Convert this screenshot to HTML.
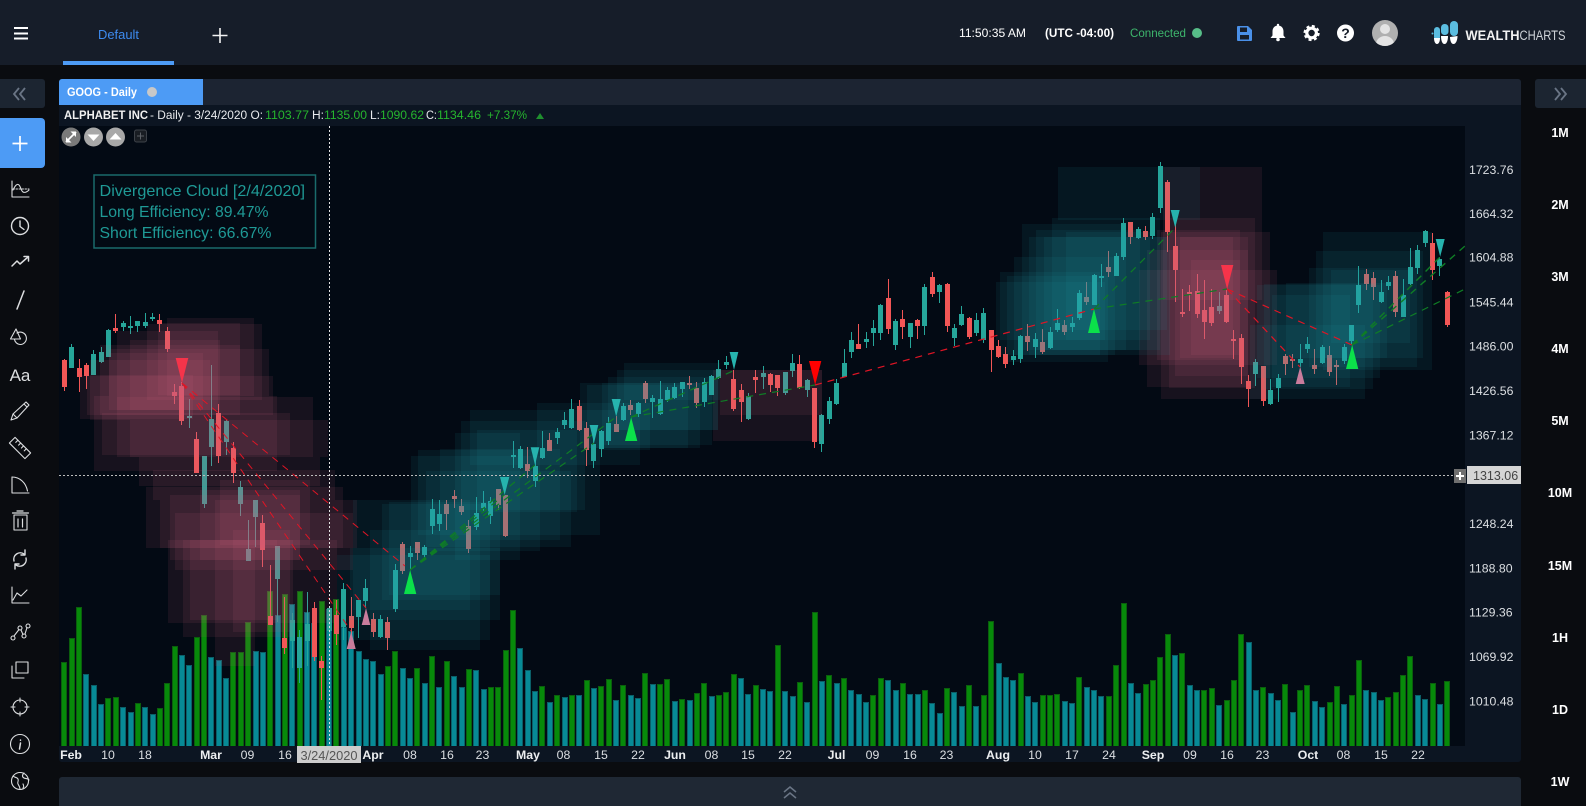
<!DOCTYPE html>
<html>
<head>
<meta charset="utf-8">
<title>WealthCharts</title>
<style>
html,body{margin:0;padding:0;background:#0a0c10;width:1586px;height:806px;overflow:hidden}
svg{display:block;position:absolute;left:0;top:0}
text{font-family:"Liberation Sans",sans-serif}
.ax{font-size:12.3px;fill:#dcdfe3;text-anchor:middle}
.mo{font-size:12.3px;fill:#eceef0;text-anchor:middle;font-weight:bold}
.pr{font-size:12.3px;fill:#dcdfe3}
.tf{font-size:12.5px;fill:#fff;text-anchor:middle;font-weight:bold}
.ic{fill:none;stroke:#dcdee0;stroke-width:1.1;stroke-linecap:round;stroke-linejoin:round}
.gr{fill:#26b52e;font-size:12.3px}
.wh{fill:#e8eaed;font-size:12.3px}
</style>
</head>
<body>
<svg width="1586" height="806" viewBox="0 0 1586 806" xmlns="http://www.w3.org/2000/svg">
<defs><clipPath id="cc"><rect x="59" y="126" width="1406" height="620"/></clipPath>
<clipPath id="av"><circle cx="1385" cy="33" r="13"/></clipPath></defs>
<rect width="1586" height="806" fill="#0a0c10"/>
<!-- top bar -->
<rect width="1586" height="65" fill="#161d29"/>
<rect x="63" y="61" width="111" height="4" fill="#4d9bf5"/>
<path d="M14 28h14M14 33.500h14M14 38.500h14" stroke="#fff" stroke-width="2"/>
<text x="98" y="39" font-size="12.500" fill="#3d8bf0" textLength="41" lengthAdjust="spacingAndGlyphs">Default</text>
<path d="M220 28v15M212.500 35.500h15" stroke="#f2f2f2" stroke-width="1.600"/>
<text x="959" y="37" font-size="12" fill="#fff" textLength="67" lengthAdjust="spacingAndGlyphs">11:50:35 AM</text>
<text x="1045" y="37" font-size="12" font-weight="bold" fill="#fff" textLength="69" lengthAdjust="spacingAndGlyphs">(UTC -04:00)</text>
<text x="1130" y="37" font-size="12" fill="#3db56c" textLength="56" lengthAdjust="spacingAndGlyphs">Connected</text>
<circle cx="1197" cy="33" r="5" fill="#57bd88"/>
<path d="M1238 26h10l4 4v10a1 1 0 0 1-1 1h-13a1 1 0 0 1-1-1v-13a1 1 0 0 1 1-1z" fill="#4a90e8"/>
<rect x="1240" y="27.500" width="7" height="4.500" fill="#161d29"/>
<rect x="1240" y="35" width="9" height="4.500" fill="#161d29"/>
<path d="M1278 25.500c-3.500 0-5.500 2.500-5.500 6v4l-2 2.500h15l-2-2.500v-4c0-3.500-2-6-5.500-6z" fill="#fff"/>
<circle cx="1278" cy="39.500" r="1.800" fill="#fff"/><circle cx="1278" cy="25" r="1.200" fill="#fff"/>
<circle cx="1311.600" cy="33" r="4.800" fill="none" stroke="#fff" stroke-width="3.200"/>
<circle cx="1311.600" cy="33" r="7" fill="none" stroke="#fff" stroke-width="2.200" stroke-dasharray="3 2.500"/>
<circle cx="1345.500" cy="33" r="8.500" fill="#fff"/>
<text x="1345.500" y="38" font-size="14" font-weight="bold" fill="#161d29" text-anchor="middle">?</text>
<circle cx="1385" cy="33" r="13" fill="#b0b0b0"/>
<g clip-path="url(#av)"><circle cx="1385" cy="29" r="5" fill="#e4e4e4"/><ellipse cx="1385" cy="44" rx="9" ry="8" fill="#e4e4e4"/></g>
<!-- logo -->
<rect x="1434" y="27" width="6" height="13" rx="3" fill="#5bbde0"/>
<rect x="1441" y="24" width="7.500" height="11" rx="3.500" fill="#5bbde0"/>
<rect x="1450" y="21" width="8" height="15" rx="4" fill="#5bbde0"/>
<path d="M1434 38c0 3 1 6 3 6s3-3 3-6zM1441 36c0 4 1 8 3.500 8s3.500-4 3.500-8zM1450 37c0 3 1 7 3.500 7s4-4 4-8z" fill="#fff"/>
<circle cx="1432.500" cy="33.500" r="1" fill="#5bbde0"/>
<text x="1465.500" y="40" font-size="13.500" font-weight="bold" fill="#f2f2f2" textLength="54" lengthAdjust="spacingAndGlyphs">WEALTH</text>
<text x="1519.500" y="40" font-size="13.500" fill="#cfd3d8" textLength="46" lengthAdjust="spacingAndGlyphs">CHARTS</text>

<!-- side buttons -->
<path d="M0 79h42a3 3 0 0 1 3 3v23a3 3 0 0 1-3 3h-42z" fill="#1c2531"/>
<path d="M19 88l-5 6 5 6M25 88l-5 6 5 6" fill="none" stroke="#6a7585" stroke-width="1.800"/>
<path d="M1586 79h-48a3 3 0 0 0-3 3v23a3 3 0 0 0 3 3h48z" fill="#1c2531"/>
<path d="M1555 88l5 6-5 6M1561 88l5 6-5 6" fill="none" stroke="#6a7585" stroke-width="1.800"/>
<path d="M0 118h41a4 4 0 0 1 4 4v42a4 4 0 0 1-4 4h-41z" fill="#4d9bf5"/>
<path d="M20 136v15M12.500 143.500h15" stroke="#fff" stroke-width="1.700"/>

<!-- panel -->
<rect x="59" y="79" width="1462" height="683" rx="3" fill="#0c1522"/>
<path d="M59 82a3 3 0 0 1 3-3h1456a3 3 0 0 1 3 3v23h-1462z" fill="#1c2432"/>
<path d="M59 82a3 3 0 0 1 3-3h141v26h-144z" fill="#4d9bf5"/>
<text x="67" y="96" font-size="12" font-weight="bold" fill="#fff" textLength="70" lengthAdjust="spacingAndGlyphs">GOOG - Daily</text>
<circle cx="152" cy="92" r="5" fill="#c8c8c8"/>
<rect x="59" y="126" width="1406" height="620" fill="#030a14"/>

<g id="chart" clip-path="url(#cc)"></g>

<!-- info line -->
<text x="64" y="119" font-size="12" font-weight="bold" fill="#f0f0f0" textLength="84" lengthAdjust="spacingAndGlyphs">ALPHABET INC</text>
<text x="150" y="119" class="wh" textLength="113" lengthAdjust="spacingAndGlyphs">- Daily - 3/24/2020 O:</text>
<text x="265" y="119" class="gr" textLength="44" lengthAdjust="spacingAndGlyphs">1103.77</text>
<text x="312" y="119" class="wh" textLength="12" lengthAdjust="spacingAndGlyphs">H:</text>
<text x="324" y="119" class="gr" textLength="43" lengthAdjust="spacingAndGlyphs">1135.00</text>
<text x="370" y="119" class="wh" textLength="10" lengthAdjust="spacingAndGlyphs">L:</text>
<text x="380" y="119" class="gr" textLength="44" lengthAdjust="spacingAndGlyphs">1090.62</text>
<text x="426" y="119" class="wh" textLength="11" lengthAdjust="spacingAndGlyphs">C:</text>
<text x="437" y="119" class="gr" textLength="44" lengthAdjust="spacingAndGlyphs">1134.46</text>
<text x="487" y="119" class="gr" textLength="40" lengthAdjust="spacingAndGlyphs">+7.37%</text>
<path d="M536 119l4-6 4 6z" fill="#1f8f2e"/>

<!-- chart controls -->
<circle cx="71" cy="137" r="9.500" fill="#7a7a7a"/>
<path d="M66 142l10-10" stroke="#fff" stroke-width="1.800"/><path d="M66 137v5.500h5.500zM76 137v-5.500h-5.500z" fill="#fff"/>
<circle cx="93.500" cy="137" r="9.500" fill="#a8a8a8"/><path d="M87.500 134.500h12l-6 6.500z" fill="#fff"/>
<circle cx="115.500" cy="137" r="9.500" fill="#a8a8a8"/><path d="M109.500 139.500h12l-6-6.500z" fill="#fff"/>
<rect x="134.500" y="130" width="12" height="12" rx="2" fill="#191d23" stroke="#3d4249"/>
<path d="M140.500 132.500v7M137 136h7" stroke="#5c6066"/>

<!-- divergence box -->
<rect x="94" y="175" width="221.500" height="73" fill="none" stroke="#1a6b6b" stroke-width="1.500"/>
<text x="99.500" y="196" font-size="16" fill="#1f9a96" textLength="205.500" lengthAdjust="spacingAndGlyphs">Divergence Cloud [2/4/2020]</text>
<text x="99.500" y="217" font-size="16" fill="#1f9a96" textLength="169" lengthAdjust="spacingAndGlyphs">Long Efficiency: 89.47%</text>
<text x="99.500" y="238" font-size="16" fill="#1f9a96" textLength="172" lengthAdjust="spacingAndGlyphs">Short Efficiency: 66.67%</text>

<!-- price axis -->
<g class="pr">
<text x="1469" y="174" class="pr">1723.76</text>
<text x="1469" y="218" class="pr">1664.32</text>
<text x="1469" y="261.500" class="pr">1604.88</text>
<text x="1469" y="306.500" class="pr">1545.44</text>
<text x="1469" y="350.500" class="pr">1486.00</text>
<text x="1469" y="395" class="pr">1426.56</text>
<text x="1469" y="439.500" class="pr">1367.12</text>
<text x="1469" y="528" class="pr">1248.24</text>
<text x="1469" y="572.500" class="pr">1188.80</text>
<text x="1469" y="616.500" class="pr">1129.36</text>
<text x="1469" y="661" class="pr">1069.92</text>
<text x="1469" y="705.500" class="pr">1010.48</text>
</g>
<rect x="1454" y="469" width="12" height="14" fill="#6f6f6f"/>
<path d="M1460 472v8M1456 476h8" stroke="#fff" stroke-width="2"/>
<rect x="1467" y="466" width="54" height="18" fill="#d5d5d5"/>
<text x="1473" y="480" font-size="12.500" fill="#444">1313.06</text>

<!-- time axis -->
<text x="71" y="759" class="mo">Feb</text><text x="108" y="759" class="ax">10</text><text x="145" y="759" class="ax">18</text>
<text x="211" y="759" class="mo">Mar</text><text x="247.500" y="759" class="ax">09</text><text x="285" y="759" class="ax">16</text>
<text x="373" y="759" class="mo">Apr</text><text x="410" y="759" class="ax">08</text><text x="447" y="759" class="ax">16</text><text x="482.500" y="759" class="ax">23</text>
<text x="528" y="759" class="mo">May</text><text x="563.500" y="759" class="ax">08</text><text x="601" y="759" class="ax">15</text><text x="638" y="759" class="ax">22</text>
<text x="675" y="759" class="mo">Jun</text><text x="711.500" y="759" class="ax">08</text><text x="748" y="759" class="ax">15</text><text x="785" y="759" class="ax">22</text>
<text x="836.500" y="759" class="mo">Jul</text><text x="872.500" y="759" class="ax">09</text><text x="910" y="759" class="ax">16</text><text x="946.500" y="759" class="ax">23</text>
<text x="998" y="759" class="mo">Aug</text><text x="1035" y="759" class="ax">10</text><text x="1072" y="759" class="ax">17</text><text x="1109" y="759" class="ax">24</text>
<text x="1153" y="759" class="mo">Sep</text><text x="1190" y="759" class="ax">09</text><text x="1227" y="759" class="ax">16</text><text x="1262.500" y="759" class="ax">23</text>
<text x="1308" y="759" class="mo">Oct</text><text x="1343.500" y="759" class="ax">08</text><text x="1381" y="759" class="ax">15</text><text x="1418" y="759" class="ax">22</text>
<rect x="297" y="746" width="64" height="17" fill="#cdcdcd"/>
<text x="329" y="760" font-size="12.500" fill="#555" text-anchor="middle" textLength="57" lengthAdjust="spacingAndGlyphs">3/24/2020</text>

<!-- bottom panel -->
<path d="M59 806v-26a3 3 0 0 1 3-3h1456a3 3 0 0 1 3 3v26z" fill="#1f2834"/>
<path d="M784 792l6-5 6 5M784 798l6-5 6 5" fill="none" stroke="#6a7585" stroke-width="1.500"/>

<!-- right timeframes -->
<text x="1560" y="137" class="tf">1M</text>
<text x="1560" y="209" class="tf">2M</text>
<text x="1560" y="281" class="tf">3M</text>
<text x="1560" y="353" class="tf">4M</text>
<text x="1560" y="425" class="tf">5M</text>
<text x="1560" y="497" class="tf">10M</text>
<text x="1560" y="570" class="tf">15M</text>
<text x="1560" y="642" class="tf">1H</text>
<text x="1560" y="714" class="tf">1D</text>
<text x="1560" y="786" class="tf">1W</text>

<!-- left tools -->
<g class="ic">
<path d="M12 181v16h17"/><path d="M13 190c2-4 4-7 6-5s2 6 4 7 4 0 6-2"/><path d="M13 189h16" stroke-dasharray="1.500 1.500" stroke-width="1"/>
<circle cx="20" cy="226" r="8.500" stroke-width="1.400"/><path d="M20 221v5.500l4 3" stroke-width="1.400"/>
<path d="M12 266l5-5 3 3 8-7" stroke-width="1.500"/><path d="M24 256.500h4.500v4.500" stroke-width="1.500"/>
<path d="M17 309l7-18" stroke-width="1.500"/>
<path d="M16 329l-5.500 10h10z"/><path d="M17 333a6.200 6.200 0 1 1 3 11.500 6 6 0 0 1-5.500-5"/>
<path d="M11 420l2-6 13-12 3 3-12 13z"/><path d="M13 414l4 4M24 404l3 3"/>
<g transform="rotate(45 20 448)"><rect x="9" y="444" width="22" height="8"/><path d="M13 444v3M17 444v3M21 444v3M25 444v3"/></g>
<path d="M12 477v16h17"/><path d="M12 477c8 0 14 6 15.500 14"/>
<rect x="14" y="515" width="13" height="15"/><path d="M12.500 513h16M17 511h6M18 519v8M22.500 519v8" stroke-width="1.200"/>
<path d="M14 561a6.500 6.500 0 0 1 10-7M26 558a6.500 6.500 0 0 1-10 7" stroke-width="1.400"/><path d="M25 550v5h-4M15 569v-5h4" stroke-width="1.400"/>
<path d="M12 587v16h17"/><path d="M13 600l4-7 4 3 6-6"/>
<circle cx="13" cy="638" r="2"/><circle cx="20" cy="628" r="2"/><circle cx="24" cy="636" r="2"/><circle cx="28" cy="626" r="2"/><path d="M14 636l5-6.500M21 630l2 4.500M25 634l2-6.500"/>
<rect x="16" y="662" width="12" height="11"/><path d="M12 666v12h12"/>
<circle cx="20" cy="707" r="7"/><path d="M20 698v4M20 712v4M11 707h4M25 707h4"/>
<circle cx="20" cy="744" r="9.500"/><path d="M20.500 740v.2M20.500 743l-1 6"  stroke-width="1.500"/>
<circle cx="20" cy="781" r="8.500"/><path d="M13 776c2 2 4 1 5 3s-1 3 0 5 2 3 2 5M24 773c-2 2-2 4 0 5s4 0 5 2M23 784c1 2 1 3 0 4" stroke-width="1.100"/>
</g>
<text x="20" y="381" font-size="17" fill="#dcdee0" text-anchor="middle">Aa</text>
</svg>

<script>
var X=function(i){return 64.3+7.356*i};
var h='';
// volume bars
var V5="307,235,142,-343,-376,-433,415,412,-442,-457,430,-442,-463,445,370,259,-286,-316,232,166,-292,-301,-355,277,277,187,-274,-277,94,-166,103,-133,94,-157,-190,124,-148,118,-200,-212,-274,-298,-304,-343,319,274,-325,-355,325,-370,289,-382,304,-349".split(',');
var V8="-292,238,-241,-298,292,292,181,61,-175,-241,-304,289,-337,316,-322,316,-316,271,-295,289,268,-331,286,-316,-325,250,-283,283,268,-334,328,-331,310,280,-319,316,307,253,-265,-313,286,-298,-304,166,-304,-319,277,-337,67,-274,256,-280,265,-301,-313,-337,316,265,-271,-301,280,-313,-313,301,-340,-370,295,-307,-349,286,-349,316,94,-220,-262,-271,250,-319,-337,316,316,313,-334,-340,262,-292,-301,-319,319,226,40,-280,-310,283,271,202,133,-196,190,-286,-301,301,295,-346,331,271,133,-157,-301,292,-310,-331,283,-367,301,286,-334,-352,337,289,-343,316,211,-301,-307,-331,322,307,256,199,-316,-328,280,-343,274".split(',');
function vol(i,v,o){v=+v;var g=v>0,y=Math.round(o+Math.abs(v)/3),x=Math.round(X(i)-3);
h+='<rect x="'+(x+.5)+'" y="'+(y+.5)+'" width="5" height="'+(746-y)+'" fill="'+(g?'#078a0a':'#078a96')+'" stroke="'+(g?'#0b5e0d':'#0b5f68')+'"/>';}
V5.forEach(function(v,i){vol(i,v,560)});
V8.forEach(function(v,i){vol(i+54,v,590)});
// candles
var S=[[0,300,"R180 261 177 272,T141 204 133 204,R204 231 178 275,R195 228 190 266,T162 225 150 225,T156 186 141 189,T90 171 88 171,R84 93 43 98,T69 81 64 92,T78 84 49 101,T63 78 63 95,T66 78 40 84,T51 57 40 64,R60 72 42 95,R93 147 82 156,R276 288 252 311,R258 363 246 374,T348 354 298 384,R417 519 396 519,T468 612 468 623,T357 441 195 499,R339 468 312 488,T363 426 360 464,R444 519 427 548,T561 612 543 647,T747 782 661 782,T600 651 600 740,R669 750 645 800"],
[28,560,"R168 195 15 195,T-42 57 -42 185,R234 264 110 283,T180 243 158 325,T231 324 210 368,T192 243 97 318,R144 291 127 304,R303 324 288 420,T144 213 143 240,R165 222 120 255,T87 201 70 240,R168 204 112 240,T120 171 120 235,T84 123 58 145,R177 216 160 232,T177 231 165 235,R186 234 171 271,T30 147 12 157,R-48 33 -54 42,T-21 -9 -42 30,R-54 -21 -54 0,T-39 -15 -45 0,T-153 -102 -182 -78,T-138 -108 -180 -88,R-168 -138 -180 -90,R-192 -183 -210 -156"],
[54,340,"R498 516 478 525,R558 627 540 640,T519 560 470 570,T489 504 453 515,T483 528 470 551,R447 495 447 510,R465 588 465 590,T345 352 303 384,T327 385 318 388,R372 394 321 415,T378 423 360 440,T324 354 273 358,R300 333 279 333,T276 294 264 313,T240 255 216 268,T207 264 178 268,R198 270 180 272,R264 330 246 378,T312 363 255 385,T273 327 270 352,T249 303 231 316,R252 276 228 276,T198 240 190 243,R195 210 180 225,T189 222 187 232,R129 177 124 188,T174 186 165 235,T177 222 123 224,T150 180 141 185,T141 174 129 178,T126 147 126 172,R129 135 108 147,R144 189 126 205,T126 186 114 202,T108 165 106 165,T87 115 60 118,T66 75 48 88,R117 207 90 213,R150 186 132 247,T168 237 160 240,R111 120 90 159,T99 111 78 147,R102 135 98 156,R105 144 105 167"],
[98,260,"T336 400 336 404,T309 333 282 352,R312 384 285 387,T360 390 358 410,R384 546 384 564,T465 552 462 575,T423 477 411 492,T369 432 358 435,T309 351 267 351,T240 276 216 293,R252 267 192 267,T237 246 216 263,T204 219 181 258,T135 219 132 240,R114 207 57 222,T183 255 178 270,R177 201 150 237,T189 231 189 264,R180 198 177 237,T81 198 72 225,R51 102 36 111,T75 96 72 129,R72 198 69 216,T204 234 192 259,T162 195 138 198,R174 231 171 237,T180 219 159 228,T159 240 145 248,R210 270 210 336"],
[127,150,"R588 620 570 625,R612 641 590 653,T618 630 600 644,T558 627 556 638,R558 576 522 602,T567 591 550 623,R576 606 538 612,T546 594 532 597,T519 540 478 545,R525 546 511 554,T519 531 501 545,T429 504 420 510,R441 456 396 464,T375 465 372 465,T378 384 343 410,R351 366 304 381,T318 378 310 378,T219 321 204 330,R216 261 215 282,T237 264 232 266,R243 261 228 269,T201 258 190 266,T48 174 36 188,R96 246 90 305,R288 360 210 455,R486 492 417 500,R426 433 405 483,R423 492 372 503,R480 516 390 566,R471 519 417 528,T468 483 427 492,R435 516 420 519,R567 573 540 628,R564 651 552 702,R693 717 675 771,T636 672 627 708,R648 753 648 768,T720 762 687 765,T684 714 672 756,R618 642 612 674,R627 633 612 654,T627 639 583 650,T582 597 561 609,R645 657 597 671,T591 639 586 642,R615 666 588 678,R645 651 630 705,T591 633 582 642,T525 573 525 585,T405 465 348 488,R372 402 357 420,R384 411 366 450,T426 456 390 459,T396 408 378 420,R378 486 363 500,T435 501 387 501,T351 402 295 405,T300 354 285 372,T243 279 240 292,R279 360 250 390,T327 348 320 378,R426 525 423 530"]];
S.forEach(function(s){s[2].split(',').forEach(function(c,k){var i=s[0]+k,col=c[0]=='R'?'#f25656':'#26a69a',n=c.slice(1).split(' ').map(function(q){return Math.round(s[1]+q/3)});
var x=Math.round(X(i)-2.5);
h+='<rect x="'+(x+2)+'" y="'+n[2]+'" width="1" height="'+(n[3]-n[2])+'" fill="'+col+'"/><rect x="'+x+'" y="'+n[0]+'" width="5" height="'+Math.max(n[1]-n[0],2)+'" fill="'+col+'"/>';});});
// clouds
var PK=[[167,318,254,396],[158,323,240,395],[147,324,262,400],[117,331,218,410],[109,349,269,396],[109,353,203,410],[87,376,273,415],[80,375,193,419],[94,396,277,471],[102,413,290,455],[117,397,313,457],[130,420,328,457],[139,457,320,486],[153,470,335,500],[146,487,343,548],[160,500,357,548],[175,513,353,570],[168,540,337,623],[183,540,293,637],[190,540,277,620],[215,500,255,666],[233,530,290,632],[130,340,220,410],[90,360,210,420],[100,345,240,415],[200,490,300,560],[220,480,310,545],[170,495,300,560],
[713,370,822,441],[720,370,822,415],
[1163,167,1262,300],[1169,218,1255,388],[1157,230,1240,360],[1175,237,1248,376],[1147,250,1248,387],[1139,270,1277,365],[1161,232,1270,399],[1180,237,1233,358],[1191,260,1240,355]];
var TL=[[337,555,490,640],[350,548,500,620],[353,500,470,610],[382,504,490,600],[389,502,500,595],[370,530,480,650],[411,456,540,551],[418,450,600,535],[426,471,571,547],[440,449,560,540],[455,433,520,560],[470,410,640,465],[461,421,585,510],[477,430,577,512],[537,403,650,450],[580,383,700,448],[587,385,688,448],[602,383,712,445],[608,377,718,430],[617,370,718,430],[624,363,720,400],
[1058,167,1200,220],[1052,218,1160,350],[1022,224,1126,350],[1036,230,1140,350],[1029,237,1170,355],[1044,237,1167,330],[1066,232,1150,340],[1014,257,1115,355],[1000,272,1100,355],[1007,276,1108,362],[996,282,1105,340],
[1323,232,1432,370],[1316,251,1423,358],[1309,268,1417,367],[1331,270,1410,343],[1257,285,1380,378],[1264,284,1373,389],[1286,283,1387,358],[1250,325,1365,399],[1272,295,1350,387]];
PK.forEach(function(r){h+='<rect x="'+r[0]+'" y="'+r[1]+'" width="'+(r[2]-r[0])+'" height="'+(r[3]-r[1])+'" fill="rgb(210,95,130)" fill-opacity=".1"/>'});
TL.forEach(function(r){h+='<rect x="'+r[0]+'" y="'+r[1]+'" width="'+(r[2]-r[0])+'" height="'+(r[3]-r[1])+'" fill="rgb(30,165,170)" fill-opacity=".085"/>'});
// dashed lines
function L(a,b,c,d,col,w){h+='<line x1="'+a+'" y1="'+b+'" x2="'+c+'" y2="'+d+'" stroke="'+col+'" stroke-width="'+(w||1)+'" stroke-dasharray="7 6"/>'}
var R='#e01525',G='#0f7d25';
L(182,383,405,566,R);L(182,383,366,608,R);L(182,383,351,631,R);
L(410,570,504.7,494.7,G,1.2);L(410,570,535,465,G,1.2);L(410,570,594,443,G,1.2);L(410,570,616,417,G,1.2);
L(631,417,735,370,G,1.2);L(631,417,815,385,G,1.2);
L(815,385,1094,309,R,1.2);
L(1094,309,1175,228,G,1.2);L(1094,309,1227,289,G,1.2);
L(1227,289,1352,345,R,1.2);L(1227,289,1300,367,R,1.2);
L(1352,345,1440,257,G,1.4);L(1352,345,1465,246,G,1.4);L(1352,345,1465,289,G,1.2);
// triangles
function T(a,b,y0,y1,col,up){var m=(a+b)/2;h+='<path d="'+(up?'M'+m+' '+y0+'L'+b+' '+y1+'L'+a+' '+y1+'Z':'M'+a+' '+y0+'L'+b+' '+y0+'L'+m+' '+y1+'Z')+'" fill="'+col+'"/>'}
var GU='#0be04a',TD='#26b3ae',PU='#c97c9c',RD='#f5344a';
T(175.7,188.3,358,383,RD,0);T(346.7,355.7,631.7,649,PU,1);T(361.7,370.3,608,625,PU,1);T(404,416.3,570,594,GU,1);
T(500,509.3,477,495,TD,0);T(530.7,539.3,447.3,465,TD,0);T(589.7,598.3,425,443.3,TD,0);T(611.7,620.7,399,416.7,TD,0);T(729.7,738.3,352,370,TD,0);
T(625,637.3,417.3,441,GU,1);T(809,821.3,361,385,'#ff0000',0);T(1088,1100,308.7,333,GU,1);T(1170.7,1179.7,210,227.7,TD,0);T(1221,1233.3,265,289.3,RD,0);T(1295.7,1304.7,366.7,384,PU,1);T(1346,1358.3,344.7,369,GU,1);T(1435.7,1444.7,239,256.7,TD,0);
// crosshair
h+='<line x1="329.500" y1="126" x2="329.500" y2="746" stroke="#e4e4e4" stroke-dasharray="2 2"/><line x1="59" y1="475.500" x2="1454" y2="475.500" stroke="#bcbcbc" stroke-dasharray="2 2"/>';
var ns='http://www.w3.org/2000/svg',tmp=document.createElementNS(ns,'svg');tmp.innerHTML=h;
var g=document.getElementById('chart');while(tmp.firstChild)g.appendChild(tmp.firstChild);
</script>
</body>
</html>
